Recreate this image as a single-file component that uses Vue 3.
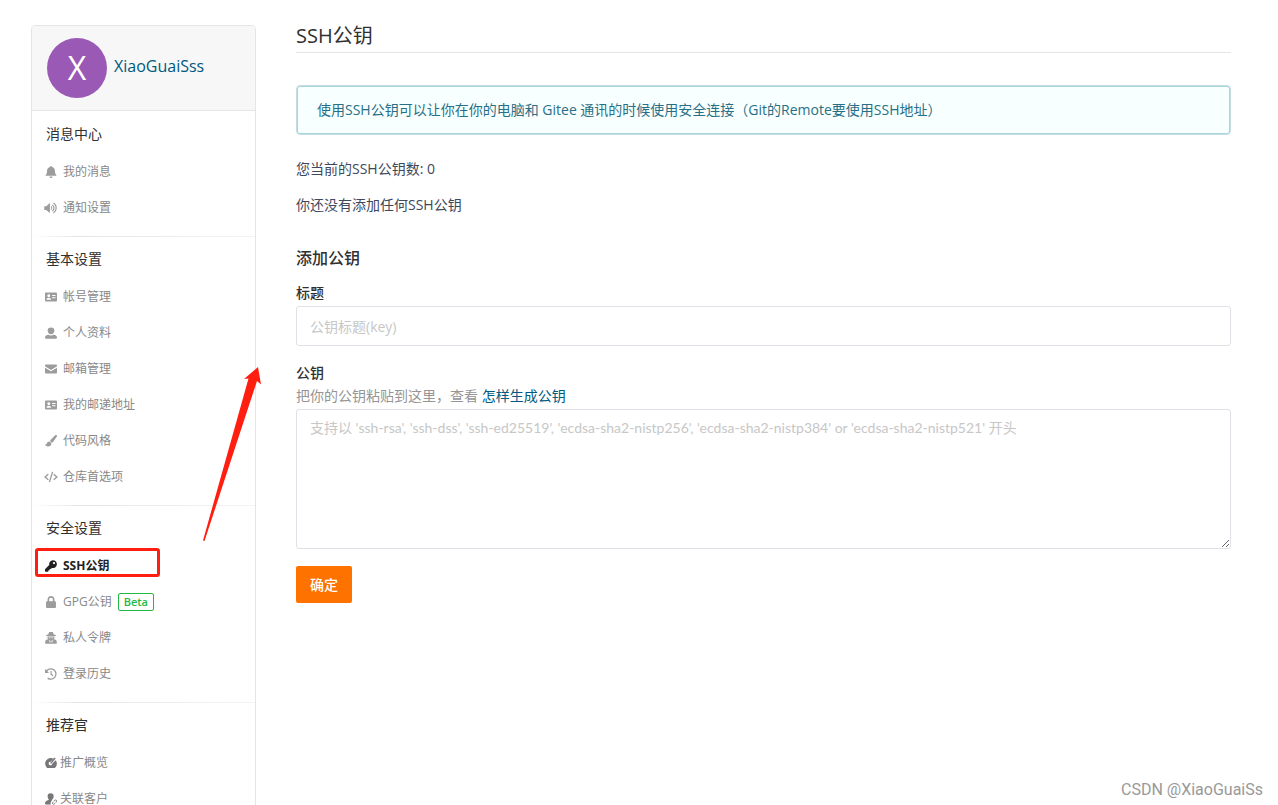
<template>
  <div class="page">
    <aside class="sidebar">
      <header class="user">
        <div class="avatar">X</div>
        <a class="user-name" href="#">XiaoGuaiSss</a>
      </header>
      <nav v-for="section in sections" :key="section.title" class="section">
        <h2 class="section-title">{{ section.title }}</h2>
        <a
          v-for="item in section.items"
          :key="item.label"
          href="#"
          class="item"
          :class="{ active: item.active, compact: section.compact }"
        >
          <svg class="item-icon" viewBox="0 0 16 16" aria-hidden="true">
            <path :d="icons[item.icon]" fill="currentColor" fill-rule="evenodd" />
          </svg>
          <span>{{ item.label }}</span>
          <span v-if="item.badge" class="badge">{{ item.badge }}</span>
          <i v-if="item.active" class="mark"></i>
        </a>
      </nav>
    </aside>

    <main class="content">
      <h1 class="title">SSH公钥</h1>
      <div class="message">
        使用SSH公钥可以让你在你的电脑和 Gitee 通讯的时候使用安全连接（Git的Remote要使用SSH地址）
      </div>
      <p class="text">您当前的SSH公钥数: {{ keyCount }}</p>
      <p class="text">你还没有添加任何SSH公钥</p>

      <form class="form" @submit.prevent>
        <h3 class="form-title">添加公钥</h3>
        <label class="label" for="key-title">标题</label>
        <input id="key-title" v-model="title" class="input" type="text" placeholder="公钥标题(key)" />
        <label class="label" for="key-body">公钥</label>
        <div class="help">把你的公钥粘贴到这里，查看 <a href="#">怎样生成公钥</a></div>
        <textarea id="key-body" v-model="body" class="input area" :placeholder="placeholder"></textarea>
        <button class="submit" type="submit">确定</button>
      </form>
    </main>

    <svg class="arrow" viewBox="0 0 60 176" aria-hidden="true">
      <path d="M56 1 42 13 46.500 12.500 1 174.500 2.500 175 55 15 59 18.500Z" fill="#ff1e10" />
    </svg>
    <div class="watermark">CSDN @XiaoGuaiSs</div>
  </div>
</template>

<script setup>
import { ref } from 'vue'

const title = ref('')
const body = ref('')
const keyCount = ref(0)

const placeholder =
  "支持以 'ssh-rsa', 'ssh-dss', 'ssh-ed25519', 'ecdsa-sha2-nistp256', 'ecdsa-sha2-nistp384' or 'ecdsa-sha2-nistp521' 开头"

const sections = [
  {
    title: '消息中心',
    items: [
      { label: '我的消息', icon: 'bell' },
      { label: '通知设置', icon: 'volume' }
    ]
  },
  {
    title: '基本设置',
    items: [
      { label: '帐号管理', icon: 'card' },
      { label: '个人资料', icon: 'user' },
      { label: '邮箱管理', icon: 'mail' },
      { label: '我的邮递地址', icon: 'card' },
      { label: '代码风格', icon: 'brush' },
      { label: '仓库首选项', icon: 'code' }
    ]
  },
  {
    title: '安全设置',
    items: [
      { label: 'SSH公钥', icon: 'key', active: true },
      { label: 'GPG公钥', icon: 'lock', badge: 'Beta' },
      { label: '私人令牌', icon: 'secret' },
      { label: '登录历史', icon: 'history' }
    ]
  },
  {
    title: '推荐官',
    compact: true,
    items: [
      { label: '推广概览', icon: 'gauge' },
      { label: '关联客户', icon: 'client' }
    ]
  }
]

const icons = {
  bell: 'M8 0c.8 0 1.300.5 1.300 1.200C12 1.800 13.300 3.800 13.300 6.500c0 2.800.6 4 1.700 5.200.5.600.1 1.400-.6 1.400H1.600c-.7 0-1.100-.8-.6-1.400C2.100 10.500 2.700 9.300 2.700 6.500c0-2.700 1.300-4.700 4-5.300C6.700.5 7.200 0 8 0ZM6 14h4a2 2 0 0 1-4 0Z',
  volume: 'M-1 5.500h2.800L5.600 2c.4-.4 1-.1 1 .5v11c0 .6-.6.900-1 .5L1.800 10.500H-1ZM8.400 5.400c1.900 1.100 1.900 4.100 0 5.200l-.6-1.100c.9-.7.9-2.300 0-3ZM10 3.200c3.600 2 3.600 7.600 0 9.600l-.7-1.200c2.600-1.600 2.600-5.600 0-7.200ZM11.600.8c5.400 3.100 5.400 11.300 0 14.400l-.8-1.300c4.400-2.500 4.400-9.300 0-11.800Z',
  card: 'M1.200 2h13.600c.7 0 1.200.5 1.200 1.200v9.600c0 .7-.5 1.200-1.200 1.200H1.200C.5 14 0 13.500 0 12.800V3.200C0 2.500.5 2 1.200 2ZM5 4.400a1.900 1.900 0 1 0 0 3.800 1.900 1.900 0 0 0 0-3.800ZM2 11.500h6c0-1.600-.8-2.600-3-2.600s-3 1-3 2.600ZM9.500 5.200v1.300H14V5.200ZM9.500 8.400v1.300H14V8.400Z',
  user: 'M8 .5a4.500 4.500 0 0 1 4.500 4.600C12.500 7.600 10.500 9.800 8 9.800S3.500 7.600 3.500 5.100A4.500 4.500 0 0 1 8 .5ZM4.500 10.200c2 1.300 5 1.300 7 0 2.800.3 4.500 1.600 4.500 3.700 0 .9-.5 1.600-1.200 1.600H1.200C.5 15.500 0 14.800 0 13.900c0-2.100 1.700-3.400 4.500-3.700Z',
  mail: 'M1.200 2h13.600c.7 0 1.200.5 1.200 1.200v1.200L8 9.200 0 4.400V3.200C0 2.500.5 2 1.200 2ZM0 6.300l8 4.800 8-4.800v6.500c0 .7-.5 1.200-1.200 1.200H1.200C.5 14 0 13.500 0 12.800Z',
  brush: 'M15.600.4c.6.600.5 1.300.1 2L10.400 9.700c-.5.700-1 .8-1.600.2L7.100 8.300c-.5-.6-.4-1.100.2-1.700L13.600.4c.7-.5 1.500-.5 2 0ZM6.200 8.800l2.300 2.200c.3 2.700-1.800 4.400-4.600 4.400-2 0-3.500-1.300-3.900-3.300 1.600.8 2.200.3 2.500-.9.400-1.600 1.700-2.700 3.700-2.400Z',
  code: 'M9.300.9 11 1.400 6.700 15.100 5 14.600ZM3.800 3.600 5 4.900 1.500 8l3.500 3.100-1.200 1.300L-1.300 8ZM12.200 3.600 17.300 8l-5.100 4.400L11 11.100 14.500 8 11 4.900Z',
  key: 'M10.500.2a5.300 5.300 0 1 1-1.400 10.400L7.800 12H6.200v1.600H4.600v1.500c0 .4-.3.700-.7.700H.7c-.4 0-.7-.3-.7-.7v-2.800l5.600-5.700A5.300 5.300 0 0 1 10.500.2ZM12 2.600a1.500 1.500 0 1 0 0 3 1.500 1.500 0 0 0 0-3Z',
  lock: 'M8 0c2.700 0 4.600 1.900 4.600 4.600V7h.6c.8 0 1.400.6 1.400 1.400v6.200c0 .8-.6 1.400-1.400 1.400H2.800c-.8 0-1.400-.6-1.400-1.400V8.400C1.400 7.600 2 7 2.800 7h.6V4.600C3.400 1.900 5.300 0 8 0ZM8 2.200c-1.400 0-2.400 1-2.400 2.400V7h4.800V4.600c0-1.400-1-2.400-2.400-2.400Z',
  secret: 'M5.600 0h4.800l1.400 3.400 2.700.6v1.300h-13V4l2.700-.6ZM3.300 6.100h9.400v1.800c0 .9-.4 1.500-1 2h2c1.500 1 2.100 2.300 2.100 4.300 0 1-.5 1.600-1.400 1.600H1.600c-.9 0-1.400-.6-1.400-1.600 0-2 .6-3.300 2.100-4.300h2c-.6-.5-1-1.100-1-2ZM5 7.200v1.200h2.300V7.200ZM8.700 7.200v1.200H11V7.200ZM5.200 10.600l1.500 4 .9-2.600ZM10.800 10.600l-2.400 1.400.9 2.600Z',
  history: 'M0 1.200 1.800 2.900A7.800 7.800 0 1 1 3 14.200l1.200-1.500A5.900 5.900 0 1 0 3.200 4.300L5.400 6.500H0ZM7.300 4.100h1.600v3.700l2.300 1.800-1 1.300-2.900-2.300Z',
  gauge: 'M8 1.300c1.300 0 2.500.3 3.600.8L7.200 6.500C5.900 6.300 4.900 7.200 4.900 8.500c0 1.500 1 2.500 2.500 2.500s2.500-1 2.300-2.400L14.400 4.200c.9 1.200 1.400 2.700 1.400 4.300 0 2.100-.8 4-2.100 5.400-.4.500-.9.700-1.500.7H3.800c-.6 0-1.100-.2-1.500-.7A7.700 7.700 0 0 1 .2 9C.2 4.700 3.700 1.300 8 1.300ZM12.800.7l1.500 1.200-6 7-1.400-1Z',
  client: 'M7.500.5a4 4 0 0 1 4 4.200c0 1.900-.8 3.200-1.900 4.100L8.200 11.500c-1 1.500-1 2.500-.4 3.700H1.200C.5 15.200 0 14.700 0 14c0-2.700 1.700-3.800 4.800-4.700.3-.4.200-.8 0-1.100C4 7.400 3.500 6.200 3.500 4.700a4 4 0 0 1 4-4.200ZM12.700 9.200a2 2 0 0 1 2.800 2.800l-1 1-.8-.8 1-1c.8-.9-.3-2-1.200-1.200l-1 1-.8-.8ZM11 11.300l.8.800-1 1c-.8.900.3 2 1.200 1.200l1-1 .8.800-1 1A2 2 0 0 1 10 12.300Z'
}
</script>

<style>
body {
  background: #fff;
}
</style>

<style scoped>
.page {
  position: relative;
  box-sizing: border-box;
  display: flex;
  align-items: flex-start;
  gap: 40px;
  height: 100vh;
  padding: 25px 47px 0 31px;
  overflow: hidden;
  font-family: "Open Sans", "Noto Sans CJK SC", sans-serif;
  font-size: 14px;
  line-height: 20px;
  color: #40485b;
}

.page *,
.page *::before {
  box-sizing: border-box;
}

a {
  color: #005980;
  text-decoration: none;
}

.sidebar {
  flex: 0 0 225px;
  border: 1px solid #e3e5e8;
  border-radius: 4px;
}

.user {
  display: flex;
  align-items: center;
  gap: 7px;
  height: 85px;
  padding: 0 15px;
  background: #f7f7f7;
  border-bottom: 1px solid #e3e5e8;
  border-radius: 4px 4px 0 0;
}

.avatar {
  width: 60px;
  height: 60px;
  border-radius: 50%;
  background: #9b59b6;
  color: #fff;
  font-size: 32px;
  font-weight: 500;
  line-height: 60px;
  text-align: center;
}

.user-name {
  padding-bottom: 4px;
  font-size: 16px;
}

.section {
  padding-bottom: 10px;
}

.section::before {
  content: "";
  display: block;
  height: 1px;
  background: linear-gradient(to right, #fff, #e3e5e8 20%, #f4f4f4);
}

.user + .section::before {
  background: none;
}

.section-title {
  margin: 0;
  padding: 12px 14px 10px;
  font-size: 14px;
  font-weight: 400;
  color: #303030;
}

.item {
  position: relative;
  display: flex;
  align-items: center;
  gap: 6px;
  height: 36px;
  padding: 0 13px;
  font-size: 12px;
  color: #888;
}

.item-icon {
  width: 12px;
  height: 12px;
  color: #9c9c9c;
  overflow: visible;
}

.compact {
  gap: 3px;
}

.compact .item-icon {
  color: #777;
}

.active {
  font-weight: 700;
  color: #222;
}

.active .item-icon {
  color: #222;
}

.badge {
  padding: 0 5px;
  border: 1px solid #21ba45;
  border-radius: 2px;
  font-size: 11px;
  font-weight: 600;
  line-height: 16px;
  color: #21ba45;
}

.mark {
  position: absolute;
  top: 0;
  left: 3px;
  width: 125px;
  height: 29px;
  border: 3px solid #ff1e10;
  border-radius: 3px;
}

.content {
  flex: 1;
  min-width: 0;
}

.title {
  margin: 0 0 32px;
  padding-bottom: 5px;
  border-bottom: 1px solid #e3e5e8;
  font-size: 20px;
  font-weight: 400;
  line-height: 22px;
  color: #303030;
}

.message {
  padding: 14px 20px;
  border: 1px solid #c5dde2;
  border-radius: 4px;
  box-shadow: inset 0 0 0 1px #a9d5de;
  background: #f8ffff;
  color: #276f86;
}

.text {
  margin: 0 0 16px;
}

.message + .text {
  margin-top: 24px;
}

.form {
  display: flex;
  flex-direction: column;
  align-items: flex-start;
  margin-top: 32px;
}

.form-title {
  margin: 0 0 14px;
  font-size: 16px;
  font-weight: 500;
  line-height: 22px;
  color: #303030;
}

.label {
  margin-bottom: 3px;
  font-weight: 500;
  color: #303030;
}

.help {
  margin-bottom: 3px;
  color: #959595;
}

.input {
  width: 100%;
  height: 40px;
  margin: 0 0 17px;
  padding: 8px 13px;
  border: 1px solid #dfe1e6;
  border-radius: 3px;
  outline: none;
  background: #fff;
  font: inherit;
  color: #40485b;
}

.input::placeholder {
  color: #c7c7c7;
}

.area {
  height: 140px;
  font-family: Lato, "Noto Sans CJK SC", sans-serif;
  resize: vertical;
}

.submit {
  height: 37px;
  padding: 0 14px;
  border: 0;
  border-radius: 2px;
  background: #fe7300;
  font: inherit;
  font-weight: 500;
  color: #fff;
}

.arrow {
  position: absolute;
  top: 366px;
  left: 202px;
  width: 60px;
  height: 176px;
}

.watermark {
  position: absolute;
  right: 15px;
  bottom: 5px;
  font-family: Roboto, sans-serif;
  font-size: 16px;
  color: #999;
}
</style>
